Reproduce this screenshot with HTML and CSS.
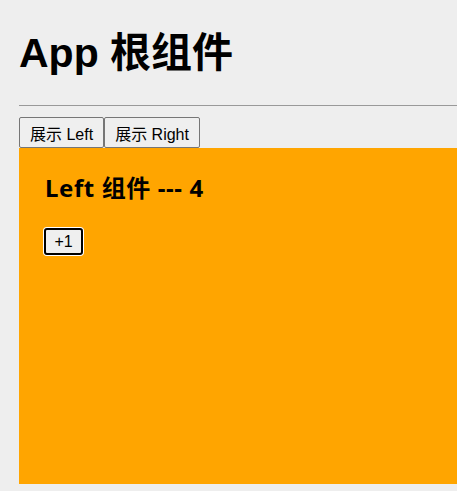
FILE: index.html
```html
<!DOCTYPE html>
<html>
<head>
<meta charset="utf-8">
<link rel="stylesheet" href="styles.css">
</head>
<body>
<div class="app">
  <h1 class="title">App 根组件</h1>
  <hr class="rule">
  <div class="tabs">
    <button class="tab">展示 Left</button><button class="tab">展示 Right</button>
  </div>
  <div class="panel">
    <h3 class="panel-title">Left 组件 --- 4</h3>
    <button class="inc">+1</button>
  </div>
</div>
</body>
</html>
```
FILE: styles.css
```css
html, body {
  margin: 0;
  padding: 0;
  background: #eeeeee;
  overflow: hidden;
}
.app {
  padding: 0 0 0 19px;
  font-family: "Liberation Sans", Arial, "Noto Sans CJK SC", sans-serif;
}
.title {
  margin: 0;
  padding-top: 29px;
  font-size: 41px;
  line-height: 48px;
  font-weight: bold;
  color: #000;
}
.rule {
  margin: 28px 0 0 0;
  border: none;
  border-top: 1px solid #999;
  height: 0;
}
.tabs {
  margin-top: 11px;
  display: flex;
}
.tab {
  font-family: "Liberation Sans", Arial, "Noto Sans CJK SC", sans-serif;
  font-size: 16px;
  height: 31px;
  padding: 0 10px;
  background: #efefef;
  border: 1px solid #767676;
  border-radius: 2px;
  color: #000;
}
.panel {
  background: #ffa500;
  height: 336px;
  padding: 26px 26px 0 26px;
  box-sizing: border-box;
}
.panel-title {
  margin: 0;
  font-family: "Noto Sans", "Noto Sans CJK SC", sans-serif;
  font-size: 24px;
  line-height: 28px;
  letter-spacing: 0.6px;
  font-weight: bold;
  color: #000;
}
.inc {
  margin-top: 26px;
  margin-left: -1px;
  font-family: "Liberation Sans", Arial, "Noto Sans CJK SC", sans-serif;
  font-size: 16px;
  height: 27px;
  width: 39px;
  padding: 0;
  background: #efefef;
  border: 2px solid #000;
  border-radius: 3px;
  box-shadow: 0 0 0 1px #fff;
  color: #000;
}
```
